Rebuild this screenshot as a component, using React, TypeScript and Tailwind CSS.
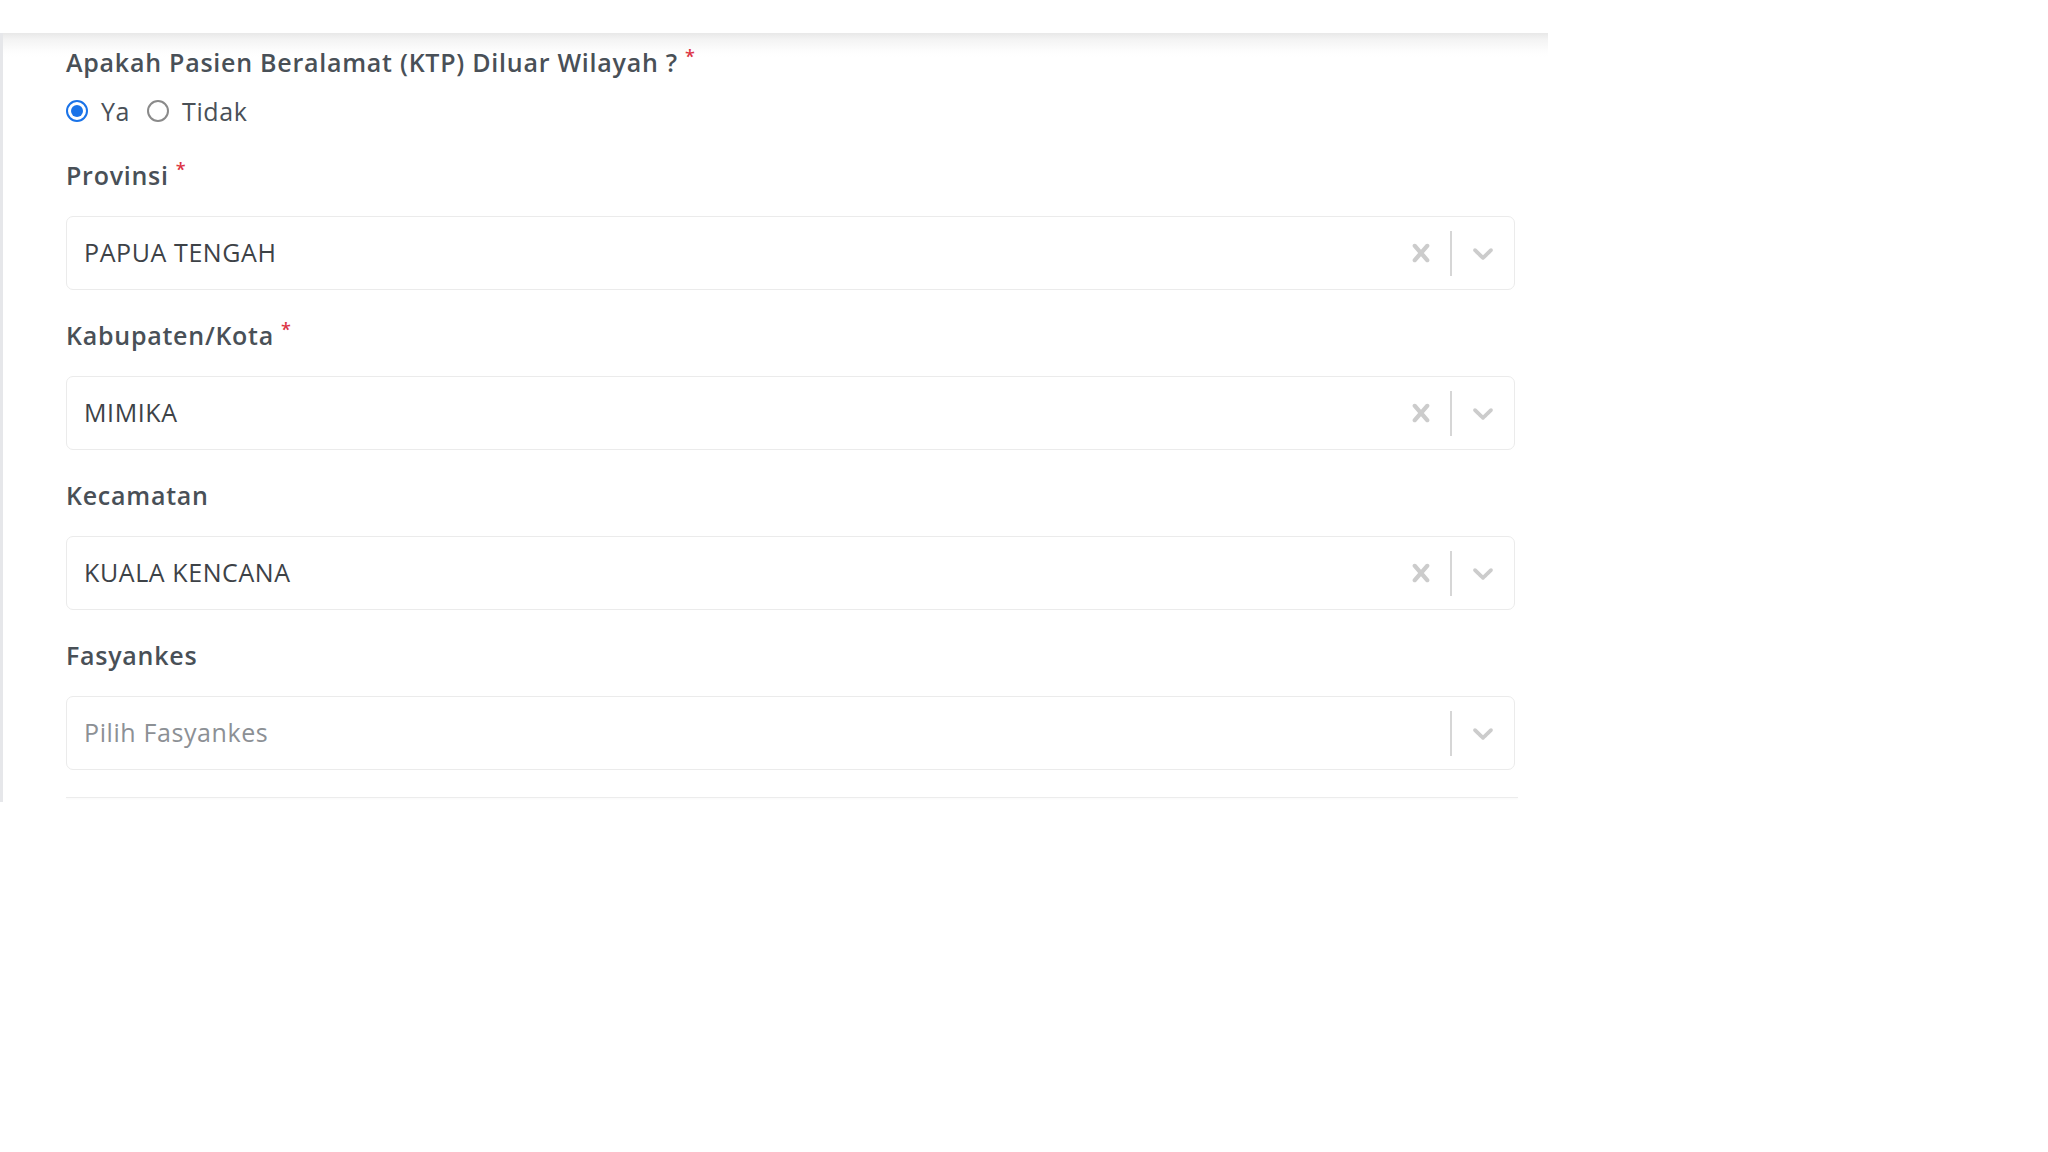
type SelectFieldProps = {
  label: string;
  required?: boolean;
  value?: string;
  placeholder: string;
};

const FONT = "font-['Open_Sans','Noto_Sans',sans-serif]";

const Asterisk = () => (
  <span className="ml-[7px] relative -top-[9px] text-[18px] font-semibold text-[#dc3545]">*</span>
);

const FieldLabel = ({ label, required }: { label: string; required?: boolean }) => (
  <div className="h-[36px] text-[25px] leading-[36px] font-semibold tracking-[0.75px] text-[#495057]">
    {label}
    {required && <Asterisk />}
  </div>
);

const ClearIcon = () => (
  <svg viewBox="0 0 20 20" className="h-[36px] w-[36px] fill-[#cccccc]">
    <path d="M14.348 14.849c-0.469 0.469-1.229 0.469-1.697 0l-2.651-3.030-2.651 3.029c-0.469 0.469-1.229 0.469-1.697 0-0.469-0.469-0.469-1.229 0-1.697l2.758-3.15-2.759-3.152c-0.469-0.469-0.469-1.228 0-1.697s1.228-0.469 1.697 0l2.652 3.031 2.651-3.031c0.469-0.469 1.228-0.469 1.697 0s0.469 1.229 0 1.697l-2.758 3.152 2.758 3.15c0.469 0.469 0.469 1.229 0 1.698z" />
  </svg>
);

const ChevronIcon = () => (
  <svg viewBox="0 0 20 20" className="h-[34px] w-[34px] fill-[#cccccc]">
    <path d="M4.516 7.548c0.436-0.446 1.043-0.481 1.576 0l3.908 3.747 3.908-3.747c0.533-0.481 1.141-0.446 1.574 0 0.436 0.445 0.408 1.197 0 1.615-0.406 0.418-4.695 4.502-4.695 4.502-0.217 0.223-0.502 0.335-0.787 0.335s-0.57-0.112-0.789-0.335c0 0-4.287-4.084-4.695-4.502s-0.436-1.17 0-1.615z" />
  </svg>
);

const SelectField = ({ label, required, value, placeholder }: SelectFieldProps) => (
  <div className="flex flex-col">
    <FieldLabel label={label} required={required} />
    <div className="mt-[23px] flex h-[74px] items-center rounded-[7px] border-[1.5px] border-[#ebebeb] bg-white">
      <div
        className={`flex-1 pl-[17px] text-[25px] tracking-[0.6px] ${
          value ? "text-[#3d4247]" : "text-[#8c9095]"
        }`}
      >
        {value ?? placeholder}
      </div>
      {value && (
        <div className="mr-[11px] flex items-center">
          <ClearIcon />
        </div>
      )}
      <span className="h-[45px] w-[2px] bg-[#d6d6d6]" />
      <div className="flex w-[62px] items-center justify-center">
        <ChevronIcon />
      </div>
    </div>
  </div>
);

const Radio = ({ checked, label }: { checked?: boolean; label: string }) => (
  <label className="flex items-center gap-[13px]">
    {checked ? (
      <span className="flex h-[22px] w-[22px] items-center justify-center rounded-full border-[2px] border-[#1a73e8] bg-white">
        <span className="h-[12px] w-[12px] rounded-full bg-[#1a73e8]" />
      </span>
    ) : (
      <span className="h-[22px] w-[22px] rounded-full border-[2px] border-[#8a8a8a] bg-white" />
    )}
    <span className="text-[25px] leading-[36px] tracking-[0.6px] text-[#495057]">{label}</span>
  </label>
);

export default function App() {
  return (
    <div className={`min-h-[1152px] w-full bg-white ${FONT}`}>
      <div className="h-[33px]" />
      <section className="w-[1548px] border-l-[3px] border-[#e6e7ea] bg-[linear-gradient(to_bottom,#e8e8e8_0px,#f3f3f3_6px,#fdfdfd_18px,#ffffff_24px)] pl-[63px] pr-[33px] pt-[11px] pb-[4px]">
        {/* Alamat di luar wilayah */}
        <FieldLabel label="Apakah Pasien Beralamat (KTP) Diluar Wilayah ?" required />
        <div className="mt-[13px] flex items-center gap-[17px]">
          <Radio checked label="Ya" />
          <Radio label="Tidak" />
        </div>

        <div className="mt-[28px] flex flex-col gap-[27px]">
          <SelectField label="Provinsi" required value="PAPUA TENGAH" placeholder="Pilih Provinsi" />
          <SelectField label="Kabupaten/Kota" required value="MIMIKA" placeholder="Pilih Kabupaten/Kota" />
          <SelectField label="Kecamatan" value="KUALA KENCANA" placeholder="Pilih Kecamatan" />
          <SelectField label="Fasyankes" placeholder="Pilih Fasyankes" />
        </div>

        <div className="mt-[27px] h-[1px] w-[1452px] bg-[#ececec] shadow-[0_1px_2px_rgba(0,0,0,0.04)]" />
      </section>
    </div>
  );
}
